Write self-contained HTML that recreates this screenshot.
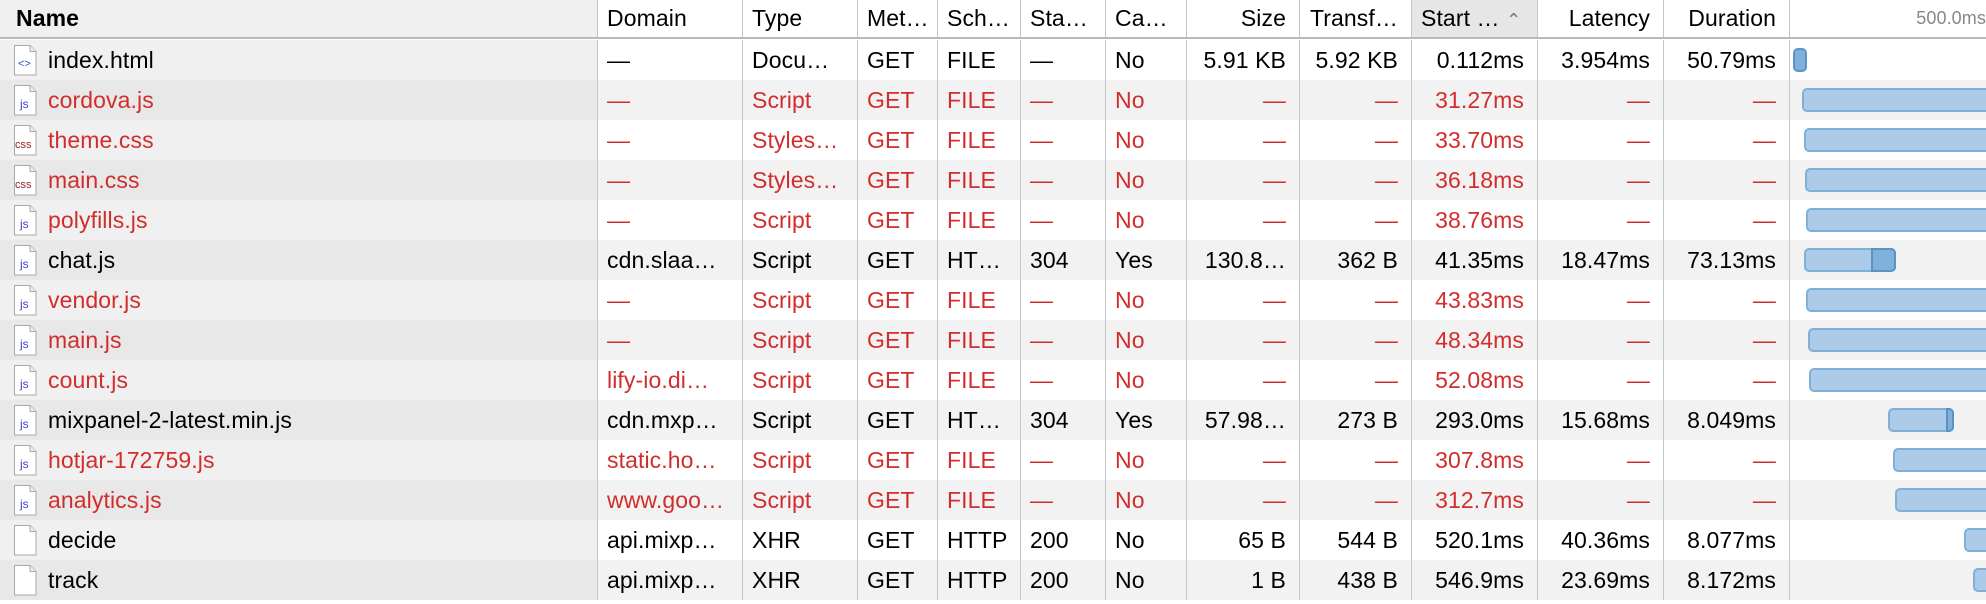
<!DOCTYPE html>
<html style="width:1986px;height:604px;overflow:hidden"><head><meta charset="utf-8"><style>
*{box-sizing:border-box;margin:0;padding:0}
body{width:1986px;height:604px;overflow:hidden;background:#fff;font-family:"Liberation Sans",Arial,sans-serif;font-size:23px;letter-spacing:0.1px;color:#000;position:relative}
.row{position:absolute;left:0;width:1986px;height:40px;display:grid;grid-template-columns:598px 145px 115px 80px 83px 85px 81px 113px 112px 126px 126px 126px 196px}
.row>div{border-right:1px solid #c6c6c6;height:40px;line-height:40px;white-space:nowrap;overflow:hidden;padding:0 9px}
.row>div:last-child{border-right:none}
.r{text-align:right;padding-right:13px!important}
.hd{top:0;height:39px;border-bottom:2px solid #b9b9b9}
.hd>div{height:37px;line-height:36px}
.o{background:#fff}.e{background:#f2f2f2}
.o>div:first-child{background:#f0f0f0}.e>div:first-child{background:#e8e8e8}
.red{color:#d22d2d}
.nm{padding-left:48px!important;position:relative}
.nm svg{position:absolute;left:13px;top:4px}
.bar{position:absolute;height:24px;background:#abcbe9;border:2px solid #80b0d8;border-radius:5px}
.dk{position:absolute;top:-2px;bottom:-2px;right:-2px;background:#80b0dc;border:2px solid #5a93c6;border-radius:0 5px 5px 0}
svg text{letter-spacing:0}
</style></head><body>
<svg width="0" height="0" style="position:absolute"><defs>
<g id="pg"><path d="M1.5 1.5H17L23 7.5V31H1.5Z" fill="#fff" stroke="#a8a8a8"/><path d="M17 1.5V7.5H23" fill="#eee" stroke="#a8a8a8"/></g>
</defs></svg>

<div class="row hd" style="background:#fff">
<div style="background:#f0f0f0;font-weight:bold;padding-left:16px">Name</div><div>Domain</div><div>Type</div><div>Met…</div><div>Sch…</div><div>Sta…</div><div>Ca…</div><div class="r">Size</div><div class="r">Transf…</div><div style="background:#e6e6e6">Start … <span style="color:#777;font-size:18px">&#8963;</span></div><div class="r">Latency</div><div class="r">Duration</div><div class="r" style="color:#888;font-size:18px;padding-right:0!important">500.0ms</div>
</div>

<div class="row o" style="top:40px"><div class="nm"><svg width="25" height="33"><use href="#pg"/><text x="5" y="23" font-size="11" fill="#2d55d0" font-family="Liberation Sans">&lt;&gt;</text></svg>index.html</div><div>—</div><div>Docu…</div><div>GET</div><div>FILE</div><div>—</div><div>No</div><div class="r">5.91 KB</div><div class="r">5.92 KB</div><div class="r">0.112ms</div><div class="r">3.954ms</div><div class="r">50.79ms</div><div></div></div>

<div class="row e red" style="top:80px"><div class="nm"><svg width="25" height="33"><use href="#pg"/><text x="7" y="24" font-size="12" fill="#4040c8" font-family="Liberation Sans">js</text></svg>cordova.js</div><div>—</div><div>Script</div><div>GET</div><div>FILE</div><div>—</div><div>No</div><div class="r">—</div><div class="r">—</div><div class="r">31.27ms</div><div class="r">—</div><div class="r">—</div><div></div></div>

<div class="row o red" style="top:120px"><div class="nm"><svg width="25" height="33"><use href="#pg"/><text x="2" y="24" font-size="11" fill="#9a2020" font-family="Liberation Sans">css</text></svg>theme.css</div><div>—</div><div>Styles…</div><div>GET</div><div>FILE</div><div>—</div><div>No</div><div class="r">—</div><div class="r">—</div><div class="r">33.70ms</div><div class="r">—</div><div class="r">—</div><div></div></div>

<div class="row e red" style="top:160px"><div class="nm"><svg width="25" height="33"><use href="#pg"/><text x="2" y="24" font-size="11" fill="#9a2020" font-family="Liberation Sans">css</text></svg>main.css</div><div>—</div><div>Styles…</div><div>GET</div><div>FILE</div><div>—</div><div>No</div><div class="r">—</div><div class="r">—</div><div class="r">36.18ms</div><div class="r">—</div><div class="r">—</div><div></div></div>

<div class="row o red" style="top:200px"><div class="nm"><svg width="25" height="33"><use href="#pg"/><text x="7" y="24" font-size="12" fill="#4040c8" font-family="Liberation Sans">js</text></svg>polyfills.js</div><div>—</div><div>Script</div><div>GET</div><div>FILE</div><div>—</div><div>No</div><div class="r">—</div><div class="r">—</div><div class="r">38.76ms</div><div class="r">—</div><div class="r">—</div><div></div></div>

<div class="row e" style="top:240px"><div class="nm"><svg width="25" height="33"><use href="#pg"/><text x="7" y="24" font-size="12" fill="#4040c8" font-family="Liberation Sans">js</text></svg>chat.js</div><div>cdn.slaa…</div><div>Script</div><div>GET</div><div>HT…</div><div>304</div><div>Yes</div><div class="r">130.8…</div><div class="r">362 B</div><div class="r">41.35ms</div><div class="r">18.47ms</div><div class="r">73.13ms</div><div></div></div>

<div class="row o red" style="top:280px"><div class="nm"><svg width="25" height="33"><use href="#pg"/><text x="7" y="24" font-size="12" fill="#4040c8" font-family="Liberation Sans">js</text></svg>vendor.js</div><div>—</div><div>Script</div><div>GET</div><div>FILE</div><div>—</div><div>No</div><div class="r">—</div><div class="r">—</div><div class="r">43.83ms</div><div class="r">—</div><div class="r">—</div><div></div></div>

<div class="row e red" style="top:320px"><div class="nm"><svg width="25" height="33"><use href="#pg"/><text x="7" y="24" font-size="12" fill="#4040c8" font-family="Liberation Sans">js</text></svg>main.js</div><div>—</div><div>Script</div><div>GET</div><div>FILE</div><div>—</div><div>No</div><div class="r">—</div><div class="r">—</div><div class="r">48.34ms</div><div class="r">—</div><div class="r">—</div><div></div></div>

<div class="row o red" style="top:360px"><div class="nm"><svg width="25" height="33"><use href="#pg"/><text x="7" y="24" font-size="12" fill="#4040c8" font-family="Liberation Sans">js</text></svg>count.js</div><div>lify-io.di…</div><div>Script</div><div>GET</div><div>FILE</div><div>—</div><div>No</div><div class="r">—</div><div class="r">—</div><div class="r">52.08ms</div><div class="r">—</div><div class="r">—</div><div></div></div>

<div class="row e" style="top:400px"><div class="nm"><svg width="25" height="33"><use href="#pg"/><text x="7" y="24" font-size="12" fill="#4040c8" font-family="Liberation Sans">js</text></svg>mixpanel-2-latest.min.js</div><div>cdn.mxp…</div><div>Script</div><div>GET</div><div>HT…</div><div>304</div><div>Yes</div><div class="r">57.98…</div><div class="r">273 B</div><div class="r">293.0ms</div><div class="r">15.68ms</div><div class="r">8.049ms</div><div></div></div>

<div class="row o red" style="top:440px"><div class="nm"><svg width="25" height="33"><use href="#pg"/><text x="7" y="24" font-size="12" fill="#4040c8" font-family="Liberation Sans">js</text></svg>hotjar-172759.js</div><div>static.ho…</div><div>Script</div><div>GET</div><div>FILE</div><div>—</div><div>No</div><div class="r">—</div><div class="r">—</div><div class="r">307.8ms</div><div class="r">—</div><div class="r">—</div><div></div></div>

<div class="row e red" style="top:480px"><div class="nm"><svg width="25" height="33"><use href="#pg"/><text x="7" y="24" font-size="12" fill="#4040c8" font-family="Liberation Sans">js</text></svg>analytics.js</div><div>www.goo…</div><div>Script</div><div>GET</div><div>FILE</div><div>—</div><div>No</div><div class="r">—</div><div class="r">—</div><div class="r">312.7ms</div><div class="r">—</div><div class="r">—</div><div></div></div>

<div class="row o" style="top:520px"><div class="nm"><svg width="25" height="33"><use href="#pg"/></svg>decide</div><div>api.mixp…</div><div>XHR</div><div>GET</div><div>HTTP</div><div>200</div><div>No</div><div class="r">65 B</div><div class="r">544 B</div><div class="r">520.1ms</div><div class="r">40.36ms</div><div class="r">8.077ms</div><div></div></div>

<div class="row e" style="top:560px"><div class="nm"><svg width="25" height="33"><use href="#pg"/></svg>track</div><div>api.mixp…</div><div>XHR</div><div>GET</div><div>HTTP</div><div>200</div><div>No</div><div class="r">1 B</div><div class="r">438 B</div><div class="r">546.9ms</div><div class="r">23.69ms</div><div class="r">8.172ms</div><div></div></div>

<div class="bar" style="left:1793px;top:48px;width:14px;background:#80b0dc;border-color:#5a93c6"></div>
<div class="bar" style="left:1802px;top:88px;width:200px"></div>
<div class="bar" style="left:1804px;top:128px;width:200px"></div>
<div class="bar" style="left:1805px;top:168px;width:200px"></div>
<div class="bar" style="left:1806px;top:208px;width:200px"></div>
<div class="bar" style="left:1804px;top:248px;width:92px"><div class="dk" style="width:25px"></div></div>
<div class="bar" style="left:1806px;top:288px;width:200px"></div>
<div class="bar" style="left:1808px;top:328px;width:200px"></div>
<div class="bar" style="left:1809px;top:368px;width:200px"></div>
<div class="bar" style="left:1888px;top:408px;width:66px"><div class="dk" style="width:8px"></div></div>
<div class="bar" style="left:1893px;top:448px;width:120px"></div>
<div class="bar" style="left:1895px;top:488px;width:120px"></div>
<div class="bar" style="left:1964px;top:528px;width:60px"></div>
<div class="bar" style="left:1973px;top:568px;width:60px"></div>
</body></html>
